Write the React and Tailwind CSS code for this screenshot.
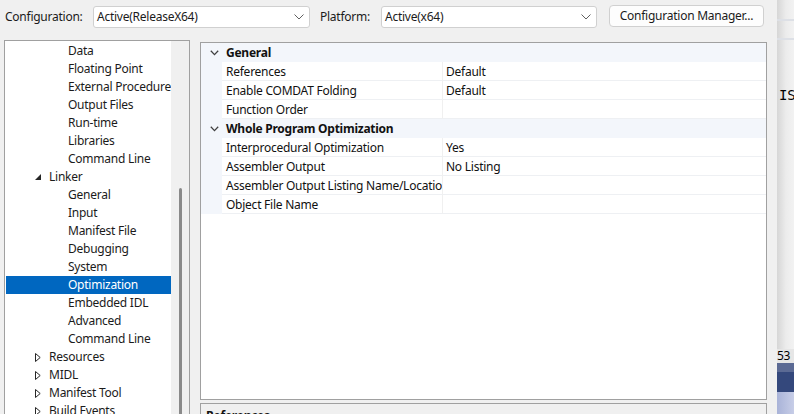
import React from "react";

const FONT = { fontFamily: '"Noto Sans", "Open Sans", sans-serif', letterSpacing: "-0.25px" };

const treeRows = [
  { label: "Data", level: 2 },
  { label: "Floating Point", level: 2 },
  { label: "External Procedures", level: 2 },
  { label: "Output Files", level: 2 },
  { label: "Run-time", level: 2 },
  { label: "Libraries", level: 2 },
  { label: "Command Line", level: 2 },
  { label: "Linker", level: 1, state: "open" },
  { label: "General", level: 2 },
  { label: "Input", level: 2 },
  { label: "Manifest File", level: 2 },
  { label: "Debugging", level: 2 },
  { label: "System", level: 2 },
  { label: "Optimization", level: 2, selected: true },
  { label: "Embedded IDL", level: 2 },
  { label: "Advanced", level: 2 },
  { label: "Command Line", level: 2 },
  { label: "Resources", level: 1, state: "closed" },
  { label: "MIDL", level: 1, state: "closed" },
  { label: "Manifest Tool", level: 1, state: "closed" },
  { label: "Build Events", level: 1, state: "closed" },
];

const gridRows = [
  { category: "General" },
  { name: "References", value: "Default" },
  { name: "Enable COMDAT Folding", value: "Default" },
  { name: "Function Order", value: "" },
  { category: "Whole Program Optimization" },
  { name: "Interprocedural Optimization", value: "Yes" },
  { name: "Assembler Output", value: "No Listing" },
  { name: "Assembler Output Listing Name/Location", value: "" },
  { name: "Object File Name", value: "" },
];

function ComboChevron() {
  return (
    <svg width="10" height="6" viewBox="0 0 10 6" className="shrink-0">
      <polyline points="0.5,0.5 5,5 9.5,0.5" fill="none" stroke="#606060" strokeWidth="1" />
    </svg>
  );
}

function Combo({ value, width }) {
  return (
    <div
      className={`h-[22px] ${width} bg-white border border-[#d0d0d0] rounded-[3px] flex items-center pl-[3px] pr-[5px] justify-between`}
    >
      <span className="text-[12px] text-[#1b1b1b] leading-none">{value}</span>
      <ComboChevron />
    </div>
  );
}

function TreeArrow({ state }) {
  if (state === "open") {
    return (
      <svg width="6" height="6" viewBox="0 0 6 6">
        <polygon points="6,0 6,6 0,6" fill="#262626" />
      </svg>
    );
  }
  return (
    <svg width="6" height="9" viewBox="0 0 6 9">
      <polygon points="0.5,0.5 5.2,4.5 0.5,8.5" fill="none" stroke="#262626" strokeWidth="1" />
    </svg>
  );
}

function TreeRow({ row }) {
  const base = "h-[18px] flex items-center text-[12px] leading-none whitespace-nowrap";
  const color = row.selected ? "bg-[#0067c0] text-white" : "text-[#1b1b1b]";
  if (row.level === 2) {
    return (
      <div className={`${base} ${color} pl-[62px]`}>{row.label}</div>
    );
  }
  return (
    <div className={`${base} ${color} pl-[29px]`}>
      <span className="w-[14px] flex items-center">
        <TreeArrow state={row.state} />
      </span>
      {row.label}
    </div>
  );
}

function CategoryChevron() {
  return (
    <svg width="9" height="6" viewBox="0 0 9 6">
      <polyline points="0.8,0.8 4.5,4.6 8.2,0.8" fill="none" stroke="#404040" strokeWidth="1.3" />
    </svg>
  );
}

function GridRow({ row }) {
  if (row.category) {
    return (
      <div className="h-[19px] shrink-0 flex items-center pt-[1px] bg-[#f3f6fb] text-[12px] font-bold text-[#111] leading-none">
        <span className="w-[25px] flex justify-center pl-[2px]">
          <CategoryChevron />
        </span>
        {row.category}
      </div>
    );
  }
  return (
    <div className="h-[19px] shrink-0 flex text-[12px] text-[#111] leading-none">
      <span className="w-[21px] bg-[#f3f6fb] shrink-0" />
      <span className="w-[221px] shrink-0 bg-white border-b border-[#eef0f3] flex items-center pt-[2px] pl-[4px] overflow-hidden whitespace-nowrap border-r border-r-[#f0f0f0]">
        {row.name}
      </span>
      <span className="flex-1 bg-white border-b border-[#eef0f3] flex items-center pt-[2px] pl-[3px] whitespace-nowrap">
        {row.value}
      </span>
    </div>
  );
}

export default function App() {
  return (
    <div className="w-[794px] h-[414px] overflow-hidden flex" style={FONT}>
      {/* property pages dialog */}
      <div className="w-[777px] h-full bg-[#f0f0f0] flex flex-col shrink-0 overflow-hidden">
        <div className="h-[40px] shrink-0 flex items-start pt-[6px]">
          <span className="pl-[5px] w-[93px] h-[22px] flex items-center text-[12px] text-[#1b1b1b]">Configuration:</span>
          <Combo value="Active(ReleaseX64)" width="w-[217px]" />
          <span className="pl-[10px] w-[71px] h-[22px] flex items-center text-[12px] text-[#1b1b1b]">Platform:</span>
          <Combo value="Active(x64)" width="w-[216px]" />
          <div className="ml-[12px] -mt-[1px] h-[22px] w-[155px] bg-[#fdfdfd] border border-[#d0d0d0] rounded-[4px] flex items-center justify-center text-[12px] text-[#1b1b1b]">
            Configuration Manager...
          </div>
        </div>
        <div className="flex shrink-0">
          {/* category tree */}
          <div className="ml-[4px] w-[186px] h-[400px] border border-[#a0a0a0] bg-white flex shrink-0">
            <div className="w-[166px] p-[1px] pr-0 overflow-hidden">
              {treeRows.map((r, i) => (
                <TreeRow key={i} row={r} />
              ))}
            </div>
            <div className="flex-1 bg-[#f0f0f0] flex justify-center pt-[147px] pl-[1px]">
              <div className="w-[3px] h-full bg-[#8a8a8a] rounded-t-full" />
            </div>
          </div>
          {/* property grid and description */}
          <div className="ml-[10px] flex flex-col pt-[2px]">
            <div className="w-[567px] h-[358px] shrink-0 border border-[#a0a0a0] bg-white flex flex-col">
              {gridRows.map((r, i) => (
                <GridRow key={i} row={r} />
              ))}
            </div>
            <div className="mt-[3px] w-[567px] h-[40px] shrink-0 border border-[#a0a0a0] bg-[#f0f0f0] pl-[5px] pt-[3px] text-[12px] font-bold text-[#111]">
              References
            </div>
          </div>
        </div>
      </div>
      {/* editor behind the dialog */}
      <div className="flex-1 h-full flex flex-col bg-gradient-to-r from-[#d6d6d6] via-[#ececec] to-[#f3f3f3]">
        <div className="h-[19px]" />
        <div className="h-[2px] bg-[#dde0e6]" />
        <div className="h-[17px]" />
        <div className="h-[2px] bg-[#dde0e6]" />
        <div className="h-[47px]" />
        <div className="h-[16px] flex items-center pl-[2px] text-[14px] text-black leading-none" style={{ fontFamily: '"DejaVu Sans Mono", monospace' }}>
          IS
        </div>
        <div className="h-[246px]" />
        <div className="h-[14px] bg-[#e6e6e6] flex items-center text-[12px] text-black leading-none">53</div>
        <div className="h-[9px] bg-[#5b6a94]" />
        <div className="h-[20px] bg-[#34487c]" />
        <div className="flex-1 bg-gradient-to-r from-[#a9b3d8] to-[#c9cfe8]" />
      </div>
    </div>
  );
}
